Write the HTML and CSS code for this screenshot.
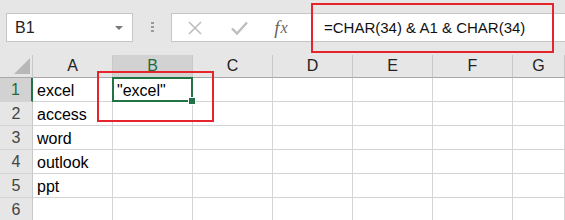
FILE: index.html
```html
<!DOCTYPE html>
<html lang="en">
<head>
    <meta charset="UTF-8" />
    <title>CHAR(34) quotes</title>
    <link rel="stylesheet" href="styles.css">
</head>
<body>

<div class="sheet">
    <!-- Name box and formula bar -->
    <div class="toolbar">
        <div class="name-box">
            <span>B1</span>
            <span class="drop"></span>
        </div>
        <div class="grip"><i></i><i></i><i></i></div>
        <div class="formula-box">
            <div class="fbtn">
                <svg width="14" height="14" viewBox="0 0 14 14"><path d="M1 1 L13 13 M13 1 L1 13" stroke="#bdbdbd" stroke-width="1.6" fill="none"/></svg>
            </div>
            <div class="fbtn">
                <svg width="17" height="14" viewBox="0 0 17 14"><path d="M1 7.5 L6 12.5 L16 1.5" stroke="#bdbdbd" stroke-width="2.4" fill="none"/></svg>
            </div>
            <div class="fbtn fx"><i>f</i><i>x</i></div>
            <div class="formula">=CHAR(34) &amp; A1 &amp; CHAR(34)</div>
        </div>
    </div>

    <!-- Grid -->
    <div class="grid">
        <div class="corner">
            <svg width="16" height="16" viewBox="0 0 16 16"><path d="M16 0 L16 16 L0 16 Z" fill="#b7b7b7"/></svg>
        </div>
        <div class="col-head">A</div>
        <div class="col-head active">B</div>
        <div class="col-head">C</div>
        <div class="col-head">D</div>
        <div class="col-head">E</div>
        <div class="col-head">F</div>
        <div class="col-head">G</div>

        <div class="row-head active">1</div>
        <div class="cell">excel</div>
        <div class="cell selected">"excel"<span class="handle"></span></div>
        <div class="cell"></div><div class="cell"></div><div class="cell"></div><div class="cell"></div><div class="cell"></div>

        <div class="row-head">2</div>
        <div class="cell">access</div>
        <div class="cell"></div><div class="cell"></div><div class="cell"></div><div class="cell"></div><div class="cell"></div><div class="cell"></div>

        <div class="row-head">3</div>
        <div class="cell">word</div>
        <div class="cell"></div><div class="cell"></div><div class="cell"></div><div class="cell"></div><div class="cell"></div><div class="cell"></div>

        <div class="row-head">4</div>
        <div class="cell">outlook</div>
        <div class="cell"></div><div class="cell"></div><div class="cell"></div><div class="cell"></div><div class="cell"></div><div class="cell"></div>

        <div class="row-head">5</div>
        <div class="cell">ppt</div>
        <div class="cell"></div><div class="cell"></div><div class="cell"></div><div class="cell"></div><div class="cell"></div><div class="cell"></div>

        <div class="row-head">6</div>
        <div class="cell"></div><div class="cell"></div><div class="cell"></div><div class="cell"></div><div class="cell"></div><div class="cell"></div><div class="cell"></div>
    </div>

    <!-- red highlight marks -->
    <div class="mark mark-formula"></div>
    <div class="mark mark-cell"></div>
</div>

</body>
</html>
```

FILE: styles.css
```css
body {
    margin: 0;
    background-color: #fff;
    font-family: "Liberation Sans", Arial, sans-serif;
    color: #000;
}
.sheet {
    position: relative;
    width: 565px;
    height: 220px;
    overflow: hidden;
}
.toolbar {
    display: flex;
    align-items: flex-start;
    height: 55px;
    padding-top: 13px;
    box-sizing: border-box;
    background-color: #e6e6e6;
}
.name-box {
    display: flex;
    align-items: center;
    justify-content: space-between;
    width: 127px;
    height: 29px;
    margin-left: 6px;
    padding: 0 9px 0 8px;
    box-sizing: border-box;
    background-color: #fff;
    border: 1px solid #c6c6c6;
    font-size: 16px;
    color: #222;
}
.drop {
    width: 0;
    height: 0;
    border-left: 4px solid transparent;
    border-right: 4px solid transparent;
    border-top: 4px solid #777;
}
.grip {
    display: flex;
    flex-direction: column;
    gap: 2px;
    width: 3px;
    margin: 9px 17px 0 18px;
}
.grip i {
    display: block;
    width: 3px;
    height: 2px;
    background-color: #9a9a9a;
}
.formula-box {
    display: flex;
    align-items: center;
    flex: 1;
    height: 29px;
    box-sizing: border-box;
    background-color: #fff;
    border: 1px solid #c6c6c6;
    border-right: none;
}
.fbtn {
    display: flex;
    align-items: center;
    justify-content: center;
    width: 44px;
    height: 100%;
}
.fbtn:first-child {
    margin-left: 1px;
}
.fx {
    font-family: "Liberation Serif", "Times New Roman", serif;
    font-style: italic;
    font-size: 19px;
    color: #666;
    margin-left: -2px;
}
.fx i:last-child {
    font-size: 16px;
    margin-left: 1px;
}
.formula {
    margin-left: 21px;
    font-size: 15px;
    white-space: nowrap;
    color: #111;
}
.grid {
    display: grid;
    grid-template-columns: 33px repeat(6, 80px) 52px;
    grid-template-rows: 23px repeat(6, 24px);
    background-color: #fff;
}
.corner {
    display: flex;
    align-items: flex-end;
    justify-content: flex-end;
    padding: 0 2px 3px 0;
    background-color: #e6e6e6;
    border-right: 1px solid #c8c8c8;
    border-bottom: 1px solid #a8a8a8;
}
.col-head {
    display: flex;
    align-items: center;
    justify-content: center;
    background-color: #e6e6e6;
    border-right: 1px solid #c8c8c8;
    border-bottom: 1px solid #a8a8a8;
    font-size: 16px;
    color: #222;
}
.col-head.active {
    background-color: #d2d2d2;
    color: #1e6b42;
    border-bottom: 1px solid #217346;
}
.row-head {
    display: flex;
    align-items: center;
    justify-content: center;
    background-color: #e6e6e6;
    border-right: 1px solid #c8c8c8;
    border-bottom: 1px solid #d4d4d4;
    font-size: 16px;
    color: #444;
}
.row-head.active {
    background-color: #d2d2d2;
    color: #1e6b42;
    border-right: 2px solid #217346;
}
.cell {
    display: flex;
    align-items: flex-end;
    padding: 0 0 1px 4px;
    border-right: 1px solid #d4d4d4;
    border-bottom: 1px solid #d4d4d4;
    font-size: 16px;
    line-height: 19px;
    white-space: nowrap;
}
.cell.selected {
    position: relative;
}
.cell.selected::after {
    content: "";
    position: absolute;
    left: -1px;
    top: -1px;
    right: -1px;
    bottom: -1px;
    border: 2px solid #217346;
}
.handle {
    position: absolute;
    right: -4px;
    bottom: -4px;
    width: 6px;
    height: 6px;
    background-color: #217346;
    border: 1px solid #fff;
    z-index: 1;
}
.mark {
    position: absolute;
    border: 2px solid #e5242b;
    box-sizing: border-box;
}
.mark-formula {
    left: 311px;
    top: 3px;
    width: 243px;
    height: 50px;
}
.mark-cell {
    left: 97px;
    top: 71px;
    width: 117px;
    height: 51px;
}
```
